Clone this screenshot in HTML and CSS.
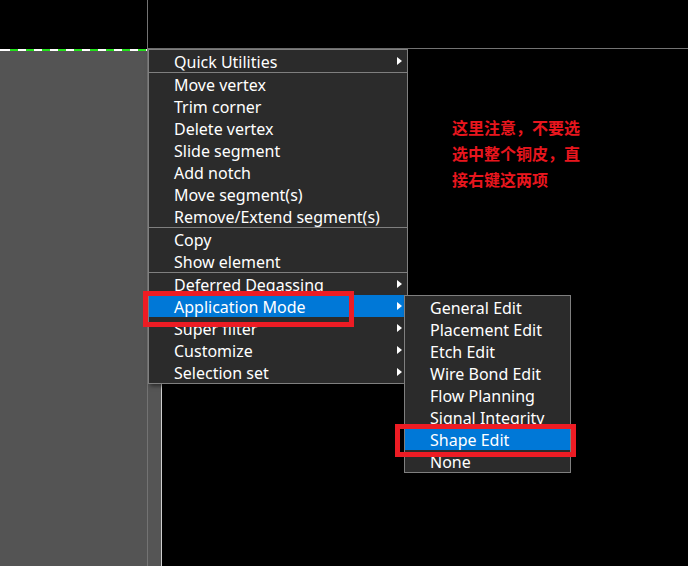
FILE: index.html
```html
<!DOCTYPE html>
<html lang="en">
<head>
  <meta charset="UTF-8" />
  <title>Application Mode</title>
  <link rel="stylesheet" href="styles.css">
</head>
<body>

  <div class="window">
    <!-- left panel -->
    <div class="side">
      <div class="side-top"></div>
      <div class="side-dash"></div>
      <div class="side-panel"></div>
    </div>

    <div class="divider"></div>

    <!-- design canvas -->
    <div class="main">
      <div class="main-top"></div>
      <div class="work">
        <div class="work-strip"></div>
        <div class="canvas">
          <p class="note">这里注意，不要选<br>选中整个铜皮，直<br>接右键这两项</p>
        </div>
      </div>
    </div>
  </div>

  <!-- Context menu -->
  <div class="menu context">
    <div class="item sub">Quick Utilities</div>
    <div class="sep"></div>
    <div class="item">Move vertex</div>
    <div class="item">Trim corner</div>
    <div class="item">Delete vertex</div>
    <div class="item">Slide segment</div>
    <div class="item">Add notch</div>
    <div class="item">Move segment(s)</div>
    <div class="item">Remove/Extend segment(s)</div>
    <div class="sep"></div>
    <div class="item">Copy</div>
    <div class="item">Show element</div>
    <div class="sep"></div>
    <div class="item sub">Deferred Degassing</div>
    <div class="item sub active">Application Mode</div>
    <div class="item sub">Super filter</div>
    <div class="item sub">Customize</div>
    <div class="item sub">Selection set</div>
  </div>

  <!-- Application Mode submenu -->
  <div class="menu submenu">
    <div class="item">General Edit</div>
    <div class="item">Placement Edit</div>
    <div class="item">Etch Edit</div>
    <div class="item">Wire Bond Edit</div>
    <div class="item">Flow Planning</div>
    <div class="item">Signal Integrity</div>
    <div class="item active">Shape Edit</div>
    <div class="item">None</div>
  </div>

  <!-- red highlight boxes -->
  <div class="mark mark-app"></div>
  <div class="mark mark-shape"></div>

</body>
</html>
```

FILE: styles.css
```css
* {
  box-sizing: border-box;
}

html, body {
  margin: 0;
  padding: 0;
  width: 688px;
  height: 566px;
  overflow: hidden;
  background: #000;
  font-family: "Noto Sans", "Open Sans", sans-serif;
}

.window {
  display: flex;
  height: 566px;
}

/* Left panel */
.side {
  width: 147px;
  display: flex;
  flex-direction: column;
}

.side-top {
  height: 49px;
  background: #000;
}

.side-dash {
  height: 2px;
  background: repeating-linear-gradient(90deg, #ffffff 0 8px, #22e01a 8px 16px);
  background-position: 2px 0;
}

.side-panel {
  flex: 1;
  background: #545454;
}

.divider {
  width: 1px;
  background: #737373;
}

/* Canvas area */
.main {
  flex: 1;
  display: flex;
  flex-direction: column;
}

.main-top {
  height: 49px;
  border-bottom: 1px solid #737373;
}

.work {
  flex: 1;
  display: flex;
}

.work-strip {
  width: 14px;
  background: #555;
  border-right: 1px solid #cfcfcf;
}

.canvas {
  flex: 1;
  background: #000;
  padding: 65px 0 0 290px;
}

.note {
  margin: 0;
  color: #e8161e;
  font-family: "Noto Sans CJK SC", sans-serif;
  font-weight: bold;
  font-size: 16px;
  line-height: 26px;
}

/* Menus */
.menu {
  position: absolute;
  background: #2b2b2b;
  border: 1px solid #7f7f7f;
  box-shadow: 2px 2px 4px rgba(0,0,0,0.5);
}

.context {
  left: 148px;
  top: 49px;
  width: 260px;
}

.submenu {
  left: 404px;
  top: 295px;
  width: 167px;
}

.item {
  position: relative;
  height: 22px;
  line-height: 22px;
  padding: 1px 0 0 25px;
  color: #fff;
  font-size: 16px;
  white-space: nowrap;
}

.item.active {
  background: #0078d7;
}

.item.sub::after {
  content: "";
  position: absolute;
  right: 5px;
  top: 7px;
  border-left: 5px solid #fff;
  border-top: 4px solid transparent;
  border-bottom: 4px solid transparent;
}

.sep {
  height: 1px;
  background: #7f7f7f;
}

/* Annotation boxes */
.mark {
  position: absolute;
  border: 5px solid #ed1c24;
}

.mark-app {
  left: 143px;
  top: 291px;
  width: 211px;
  height: 36px;
}

.mark-shape {
  left: 395px;
  top: 424px;
  width: 181px;
  height: 33px;
}
```
